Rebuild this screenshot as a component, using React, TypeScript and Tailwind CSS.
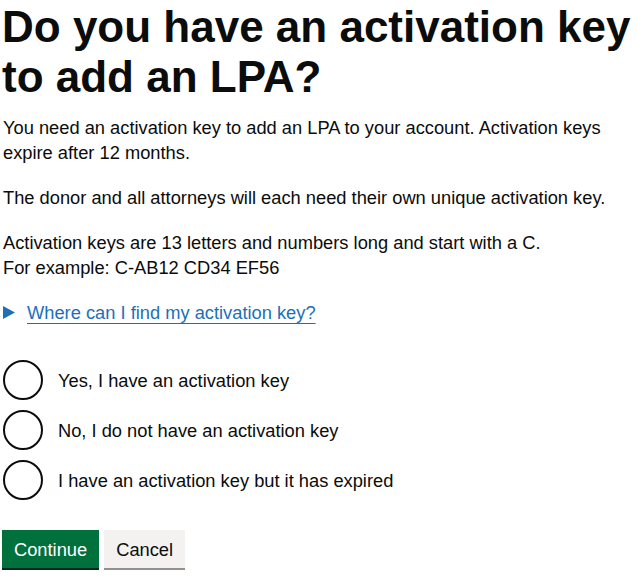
import { useState } from "react";

const options = [
  { id: "yes", label: "Yes, I have an activation key" },
  { id: "no", label: "No, I do not have an activation key" },
  { id: "expired", label: "I have an activation key but it has expired" },
];

function RadioItem({ id, label, checked, onSelect }: { id: string; label: string; checked: boolean; onSelect: (id: string) => void }) {
  return (
    <label className="flex items-center h-[40px] mb-[10px] cursor-pointer" onClick={() => onSelect(id)}>
      <span className="w-[40px] h-[40px] shrink-0 rounded-full border-2 border-[#0b0c0c] flex items-center justify-center">
        {checked && <span className="w-[20px] h-[20px] rounded-full bg-[#0b0c0c]" />}
      </span>
      <span className="pl-[15px]">{label}</span>
    </label>
  );
}

export default function App() {
  const [choice, setChoice] = useState("");

  return (
    <div className="min-h-screen bg-white text-[#0b0c0c] pl-[2px] pt-[2px] font-['Liberation_Sans',Arial,sans-serif] text-[18.3px] leading-[25px]">
      <h1 className="text-[44px] leading-[50px] font-bold mb-[13px]">
        Do you have an activation key to add an LPA?
      </h1>

      <p className="mb-[20px] pl-[1px]">
        You need an activation key to add an LPA to your account. Activation keys expire after 12 months.
      </p>
      <p className="mb-[20px] pl-[1px]">
        The donor and all attorneys will each need their own unique activation key.
      </p>
      <p className="mb-[20px] pl-[1px]">
        Activation keys are 13 letters and numbers long and start with a C.
        <br />
        For example: C-AB12 CD34 EF56
      </p>

      <div className="flex items-center pl-[1px] mb-[35px]">
        <svg width="12" height="13" viewBox="0 0 12 13" className="mr-[12px]">
          <polygon points="0,0 12,6.5 0,13" fill="#1d70b8" />
        </svg>
        <a href="#" className="text-[#1d70b8] underline decoration-1 underline-offset-[4px]">
          Where can I find my activation key?
        </a>
      </div>

      <div className="pl-[1px]">
        {options.map((o) => (
          <RadioItem key={o.id} id={o.id} label={o.label} checked={choice === o.id} onSelect={setChoice} />
        ))}
      </div>

      <div className="flex gap-[5px] mt-[30px]">
        <button className="bg-[#00703c] text-white px-[12px] h-[38px] shadow-[0_2px_0_#002d18]">Continue</button>
        <button className="bg-[#f3f2f1] text-[#0b0c0c] px-[12px] h-[38px] shadow-[0_2px_0_#929191]">Cancel</button>
      </div>
    </div>
  );
}
